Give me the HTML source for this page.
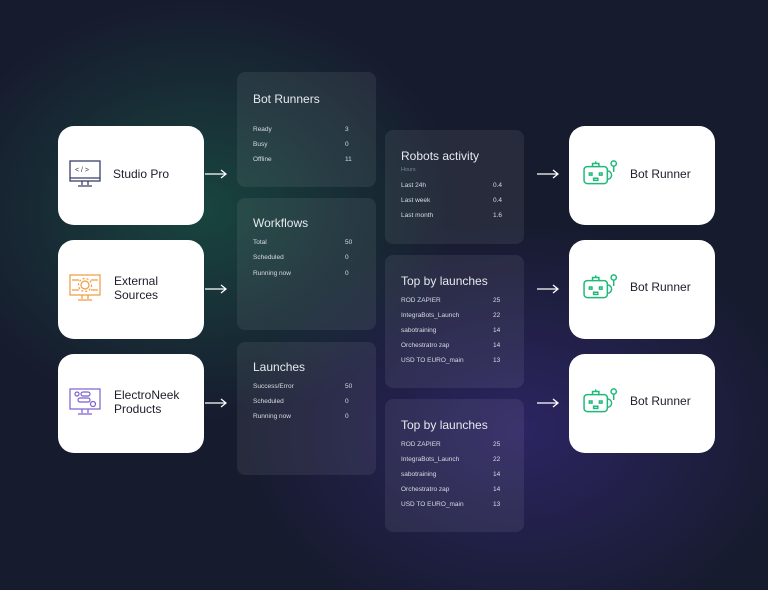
<!DOCTYPE html><html><head><style>
*{margin:0;padding:0;box-sizing:border-box}
body{width:768px;height:590px;overflow:hidden;font-family:"Liberation Sans",sans-serif;position:relative;
background:radial-gradient(ellipse 260px 210px at 200px 210px,rgba(25,110,80,.5),transparent),radial-gradient(ellipse 280px 210px at 520px 430px,rgba(60,45,140,.55),transparent),#171b2e}
.card{position:absolute;width:146px;height:99px;background:#fff;border-radius:16px}
.card .t{position:absolute;font-size:12px;color:#1d1d2b;line-height:14px}
.card svg{position:absolute}
.p{position:absolute;width:139px;border-radius:8px;background:rgba(255,255,255,.07);color:#e6e9ee}
.p h3{position:absolute;left:16px;font-weight:normal;font-size:12px}
.r{position:absolute;left:16px;font-size:6.5px;color:#d7dce3;width:100px}
.r b{position:absolute;font-weight:normal;left:92px}
.ar{position:absolute;width:22px;height:10px}
</style></head><body>
<div class="card" style="left:58px;top:126px"><svg style="left:11px;top:33px" width="32" height="32" viewBox="0 0 32 32" fill="none" stroke="#3a3f66" stroke-width="1.3"><rect x="1" y="2" width="30" height="20"/><line x1="1" y1="19" x2="31" y2="19"/><path d="M13 22v4M19 22v4M9 27h14"/><text x="6" y="13" font-size="7" fill="#333" stroke="none" font-family="Liberation Sans">&lt; / &gt;</text></svg><div class="t" style="left:55px;top:41px">Studio Pro</div></div>
<div class="card" style="left:58px;top:240px"><svg style="left:11px;top:33px" width="32" height="32" viewBox="0 0 32 32" fill="none" stroke="#f09a3e" stroke-width="1.2"><rect x="1" y="2" width="30" height="20"/><path d="M13 22v4M19 22v4M9 27h14"/><circle cx="16" cy="12" r="4"/><circle cx="16" cy="12" r="6.5" stroke-dasharray="2 2"/><path d="M3 7h7M3 17h7M22 7h7M22 17h7"/></svg><div class="t" style="left:56px;top:34px">External<br>Sources</div></div>
<div class="card" style="left:58px;top:354px"><svg style="left:11px;top:33px" width="32" height="32" viewBox="0 0 32 32" fill="none" stroke="#7a5fd0" stroke-width="1.2"><rect x="1" y="2" width="30" height="20"/><path d="M13 22v4M19 22v4M9 27h14"/><circle cx="8" cy="7" r="2"/><rect x="12" y="5" width="9" height="4" rx="2"/><rect x="9" y="11" width="12" height="4" rx="2"/><circle cx="24" cy="17" r="2.5"/></svg><div class="t" style="left:56px;top:34px">ElectroNeek<br>Products</div></div>

<div class="p" style="left:237px;top:72px;height:115px"><h3 style="top:20px">Bot Runners</h3>
<div class="r" style="top:54px">Ready<b>3</b></div><div class="r" style="top:69px">Busy<b>0</b></div><div class="r" style="top:84px">Offline<b>11</b></div></div>
<div class="p" style="left:237px;top:198px;height:132px"><h3 style="top:18px">Workflows</h3>
<div class="r" style="top:41px">Total<b>50</b></div><div class="r" style="top:56px">Scheduled<b>0</b></div><div class="r" style="top:72px">Running now<b>0</b></div></div>
<div class="p" style="left:237px;top:342px;height:133px"><h3 style="top:18px">Launches</h3>
<div class="r" style="top:41px">Success/Error<b>50</b></div><div class="r" style="top:56px">Scheduled<b>0</b></div><div class="r" style="top:71px">Running now<b>0</b></div></div>

<div class="p" style="left:385px;top:130px;height:114px"><h3 style="top:19px">Robots activity</h3>
<div class="r" style="top:37px;font-size:5.5px;color:#7c8596">Hours</div>
<div class="r" style="top:52px">Last 24h<b>0.4</b></div><div class="r" style="top:67px">Last week<b>0.4</b></div><div class="r" style="top:82px">Last month<b>1.6</b></div></div>
<div class="p" style="left:385px;top:255px;height:133px"><h3 style="top:19px">Top by launches</h3>
<div class="r" style="top:42px">ROD ZAPIER<b>25</b></div><div class="r" style="top:57px">IntegraBots_Launch<b>22</b></div><div class="r" style="top:72px">sabotraining<b>14</b></div><div class="r" style="top:87px">Orchestratro zap<b>14</b></div><div class="r" style="top:102px">USD TO EURO_main<b>13</b></div></div>
<div class="p" style="left:385px;top:399px;height:133px"><h3 style="top:19px">Top by launches</h3>
<div class="r" style="top:42px">ROD ZAPIER<b>25</b></div><div class="r" style="top:57px">IntegraBots_Launch<b>22</b></div><div class="r" style="top:72px">sabotraining<b>14</b></div><div class="r" style="top:87px">Orchestratro zap<b>14</b></div><div class="r" style="top:102px">USD TO EURO_main<b>13</b></div></div>

<svg width="0" height="0" style="position:absolute"><defs><g id="a"><path d="M0 5h21M16 1l5 4-5 4" fill="none" stroke="#fff" stroke-width="1.3"/></g>
<g id="bot" fill="none" stroke="#1fb97a" stroke-width="1.4"><rect x="1" y="7" width="22" height="16" rx="3"/><path d="M9 7V4h6v3M12 4V2"/><rect x="6" y="13" width="2.5" height="2"/><rect x="15.5" y="13" width="2.5" height="2"/><path d="M10 18h4v2h-4z"/><path d="M23 11a4 4 0 0 1 0 8"/><path d="M29 6v6"/><circle cx="29" cy="4" r="2.5"/></g></defs></svg>
<svg class="ar" style="left:205px;top:169px"><use href="#a"/></svg>
<svg class="ar" style="left:205px;top:284px"><use href="#a"/></svg>
<svg class="ar" style="left:205px;top:398px"><use href="#a"/></svg>
<svg class="ar" style="left:537px;top:169px"><use href="#a"/></svg>
<svg class="ar" style="left:537px;top:284px"><use href="#a"/></svg>
<svg class="ar" style="left:537px;top:398px"><use href="#a"/></svg>

<div class="card" style="left:569px;top:126px"><svg style="left:14px;top:33px" width="36" height="28" viewBox="0 0 34 26"><use href="#bot"/></svg><div class="t" style="left:61px;top:41px">Bot Runner</div></div>
<div class="card" style="left:569px;top:240px"><svg style="left:14px;top:33px" width="36" height="28" viewBox="0 0 34 26"><use href="#bot"/></svg><div class="t" style="left:61px;top:40px">Bot Runner</div></div>
<div class="card" style="left:569px;top:354px"><svg style="left:14px;top:33px" width="36" height="28" viewBox="0 0 34 26"><use href="#bot"/></svg><div class="t" style="left:61px;top:40px">Bot Runner</div></div>
</body></html>
